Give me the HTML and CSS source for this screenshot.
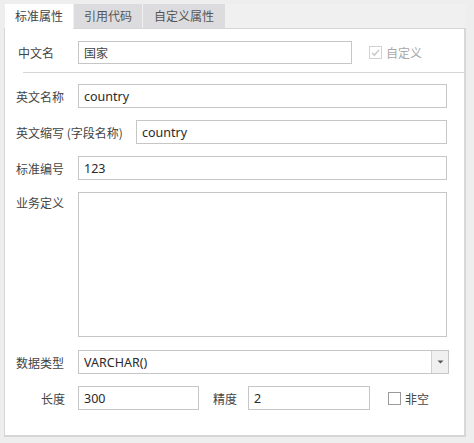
FILE: index.html
```html
<!DOCTYPE html>
<html lang="zh">
<head>
<meta charset="utf-8">
<link rel="stylesheet" href="styles.css">
</head>
<body>
<div class="window">
  <div class="tabbar">
    <div class="tab active">标准属性</div>
    <div class="tab">引用代码</div>
    <div class="tab">自定义属性</div>
  </div>
  <div class="panel">
    <div class="row first">
      <label class="lbl lbl-indent">中文名</label>
      <div class="field w-cn">国家</div>
      <span class="check disabled">
        <svg class="box" width="13" height="13" viewBox="0 0 13 13"><rect x="0.5" y="0.5" width="12" height="12" fill="#fff" stroke="#d2d2d2"/><path d="M3 6.8 L5.4 9.2 L10 3.8" fill="none" stroke="#c4c4c4" stroke-width="1.3"/></svg>
        <span class="check-text">自定义</span>
      </span>
    </div>
    <div class="sep"></div>
    <div class="row">
      <label class="lbl">英文名称</label>
      <div class="field grow">country</div>
    </div>
    <div class="row">
      <label class="lbl lbl-wide">英文缩写 (字段名称)</label>
      <div class="field grow">country</div>
    </div>
    <div class="row">
      <label class="lbl">标准编号</label>
      <div class="field grow">123</div>
    </div>
    <div class="row area-row">
      <label class="lbl lbl-top">业务定义</label>
      <div class="field grow area"></div>
    </div>
    <div class="row select-row">
      <label class="lbl">数据类型</label>
      <div class="field grow select">
        <span class="select-val">VARCHAR()</span>
        <span class="drop"><svg width="7" height="4" viewBox="0 0 7 4"><path d="M0.5 0.5 L6.5 0.5 L3.5 3.5 Z" fill="#555"/></svg></span>
      </div>
    </div>
    <div class="row">
      <label class="lbl lbl-right">长度</label>
      <div class="field w-len">300</div>
      <label class="lbl2">精度</label>
      <div class="field w-prec">2</div>
      <span class="check">
        <svg class="box" width="13" height="13" viewBox="0 0 13 13"><rect x="0.5" y="0.5" width="12" height="12" fill="#fff" stroke="#9a9a9a"/></svg>
        <span class="check-text dark">非空</span>
      </span>
    </div>
  </div>
</div>
</body>
</html>
```

FILE: styles.css
```css
html, body {
  margin: 0;
  padding: 0;
}
body {
  background: #eeeeee;
  font-family: "Noto Sans CJK SC", "Noto Sans", sans-serif;
  font-size: 12px;
  color: #444;
  width: 474px;
  height: 443px;
  overflow: hidden;
}
.window {
  padding-top: 4px;
}
.tabbar {
  display: flex;
  margin-left: 5px;
  width: 461px;
  height: 24px;
  background: #f0f0f0;
}
.tab {
  height: 24px;
  line-height: 24px;
  padding: 0 10px;
  background: #dcdcdf;
  color: #555;
  margin-right: 1px;
  white-space: nowrap;
}
.tab:nth-child(3) {
  padding: 0 11px;
}
.tab.active {
  background: #ffffff;
  height: 25px;
  position: relative;
  z-index: 1;
  color: #444;
}
.panel {
  margin-left: 4px;
  width: 462px;
  height: 409px;
  box-sizing: border-box;
  background: #fff;
  border: 1px solid #d6d6d6;
  border-right: 2px solid #d8d8d8;
  border-bottom: 2px solid #d6d6d6;
  padding: 12px 0 0 11px;
}
.row {
  display: flex;
  align-items: center;
  height: 24px;
  margin-right: 17px;
  margin-top: 12px;
}
.row.first {
  margin-top: 0;
  height: 23px;
}
.lbl {
  width: 62px;
  flex: none;
  white-space: nowrap;
  color: #444;
}
.lbl-indent {
  padding-left: 2px;
  width: 60px;
}
.lbl-wide {
  width: 120px;
}
.lbl-right {
  text-align: right;
  padding-right: 13px;
  width: 49px;
}
.lbl-top {
  align-self: flex-start;
  padding-top: 2px;
}
.lbl2 {
  margin-left: 14px;
  width: 35px;
  flex: none;
  color: #444;
}
.field {
  box-sizing: border-box;
  height: 100%;
  border: 1px solid #c6c6c6;
  background: #fff;
  padding: 0 5px;
  display: flex;
  align-items: center;
  font-family: "Noto Sans", "Noto Sans CJK SC", sans-serif;
  font-size: 12.5px;
  color: #2a2a2a;
}
.w-cn {
  width: 274px;
  font-family: "Noto Sans CJK SC", sans-serif;
  font-size: 12px;
  color: #444;
}
.grow {
  flex: 1;
}
.w-len {
  width: 121px;
}
.w-prec {
  width: 122px;
}
.sep {
  height: 1px;
  background: #d6d6d6;
  margin: 8px 0 0 7px;
}
.sep + .row {
  margin-top: 11px;
}
.area-row {
  height: 145px;
  align-items: stretch;
}
.select-row {
  margin-top: 13px;
  margin-right: 15px;
}
.select {
  padding: 0 0 0 5px;
  justify-content: space-between;
}
.select-val {
  flex: 1;
}
.drop {
  width: 16px;
  height: 100%;
  background: #f0f0f0;
  border-left: 1px solid #d0d0d0;
  display: flex;
  align-items: center;
  justify-content: center;
}
.check {
  display: flex;
  align-items: center;
  margin-left: 17px;
}
.row .check:last-child {
  margin-left: 18px;
}
.row.first .check {
  margin-left: 17px;
}
.box {
  flex: none;
}
.check-text {
  margin-left: 4px;
  color: #a8a8a8;
}
.check-text.dark {
  color: #444;
}
```
